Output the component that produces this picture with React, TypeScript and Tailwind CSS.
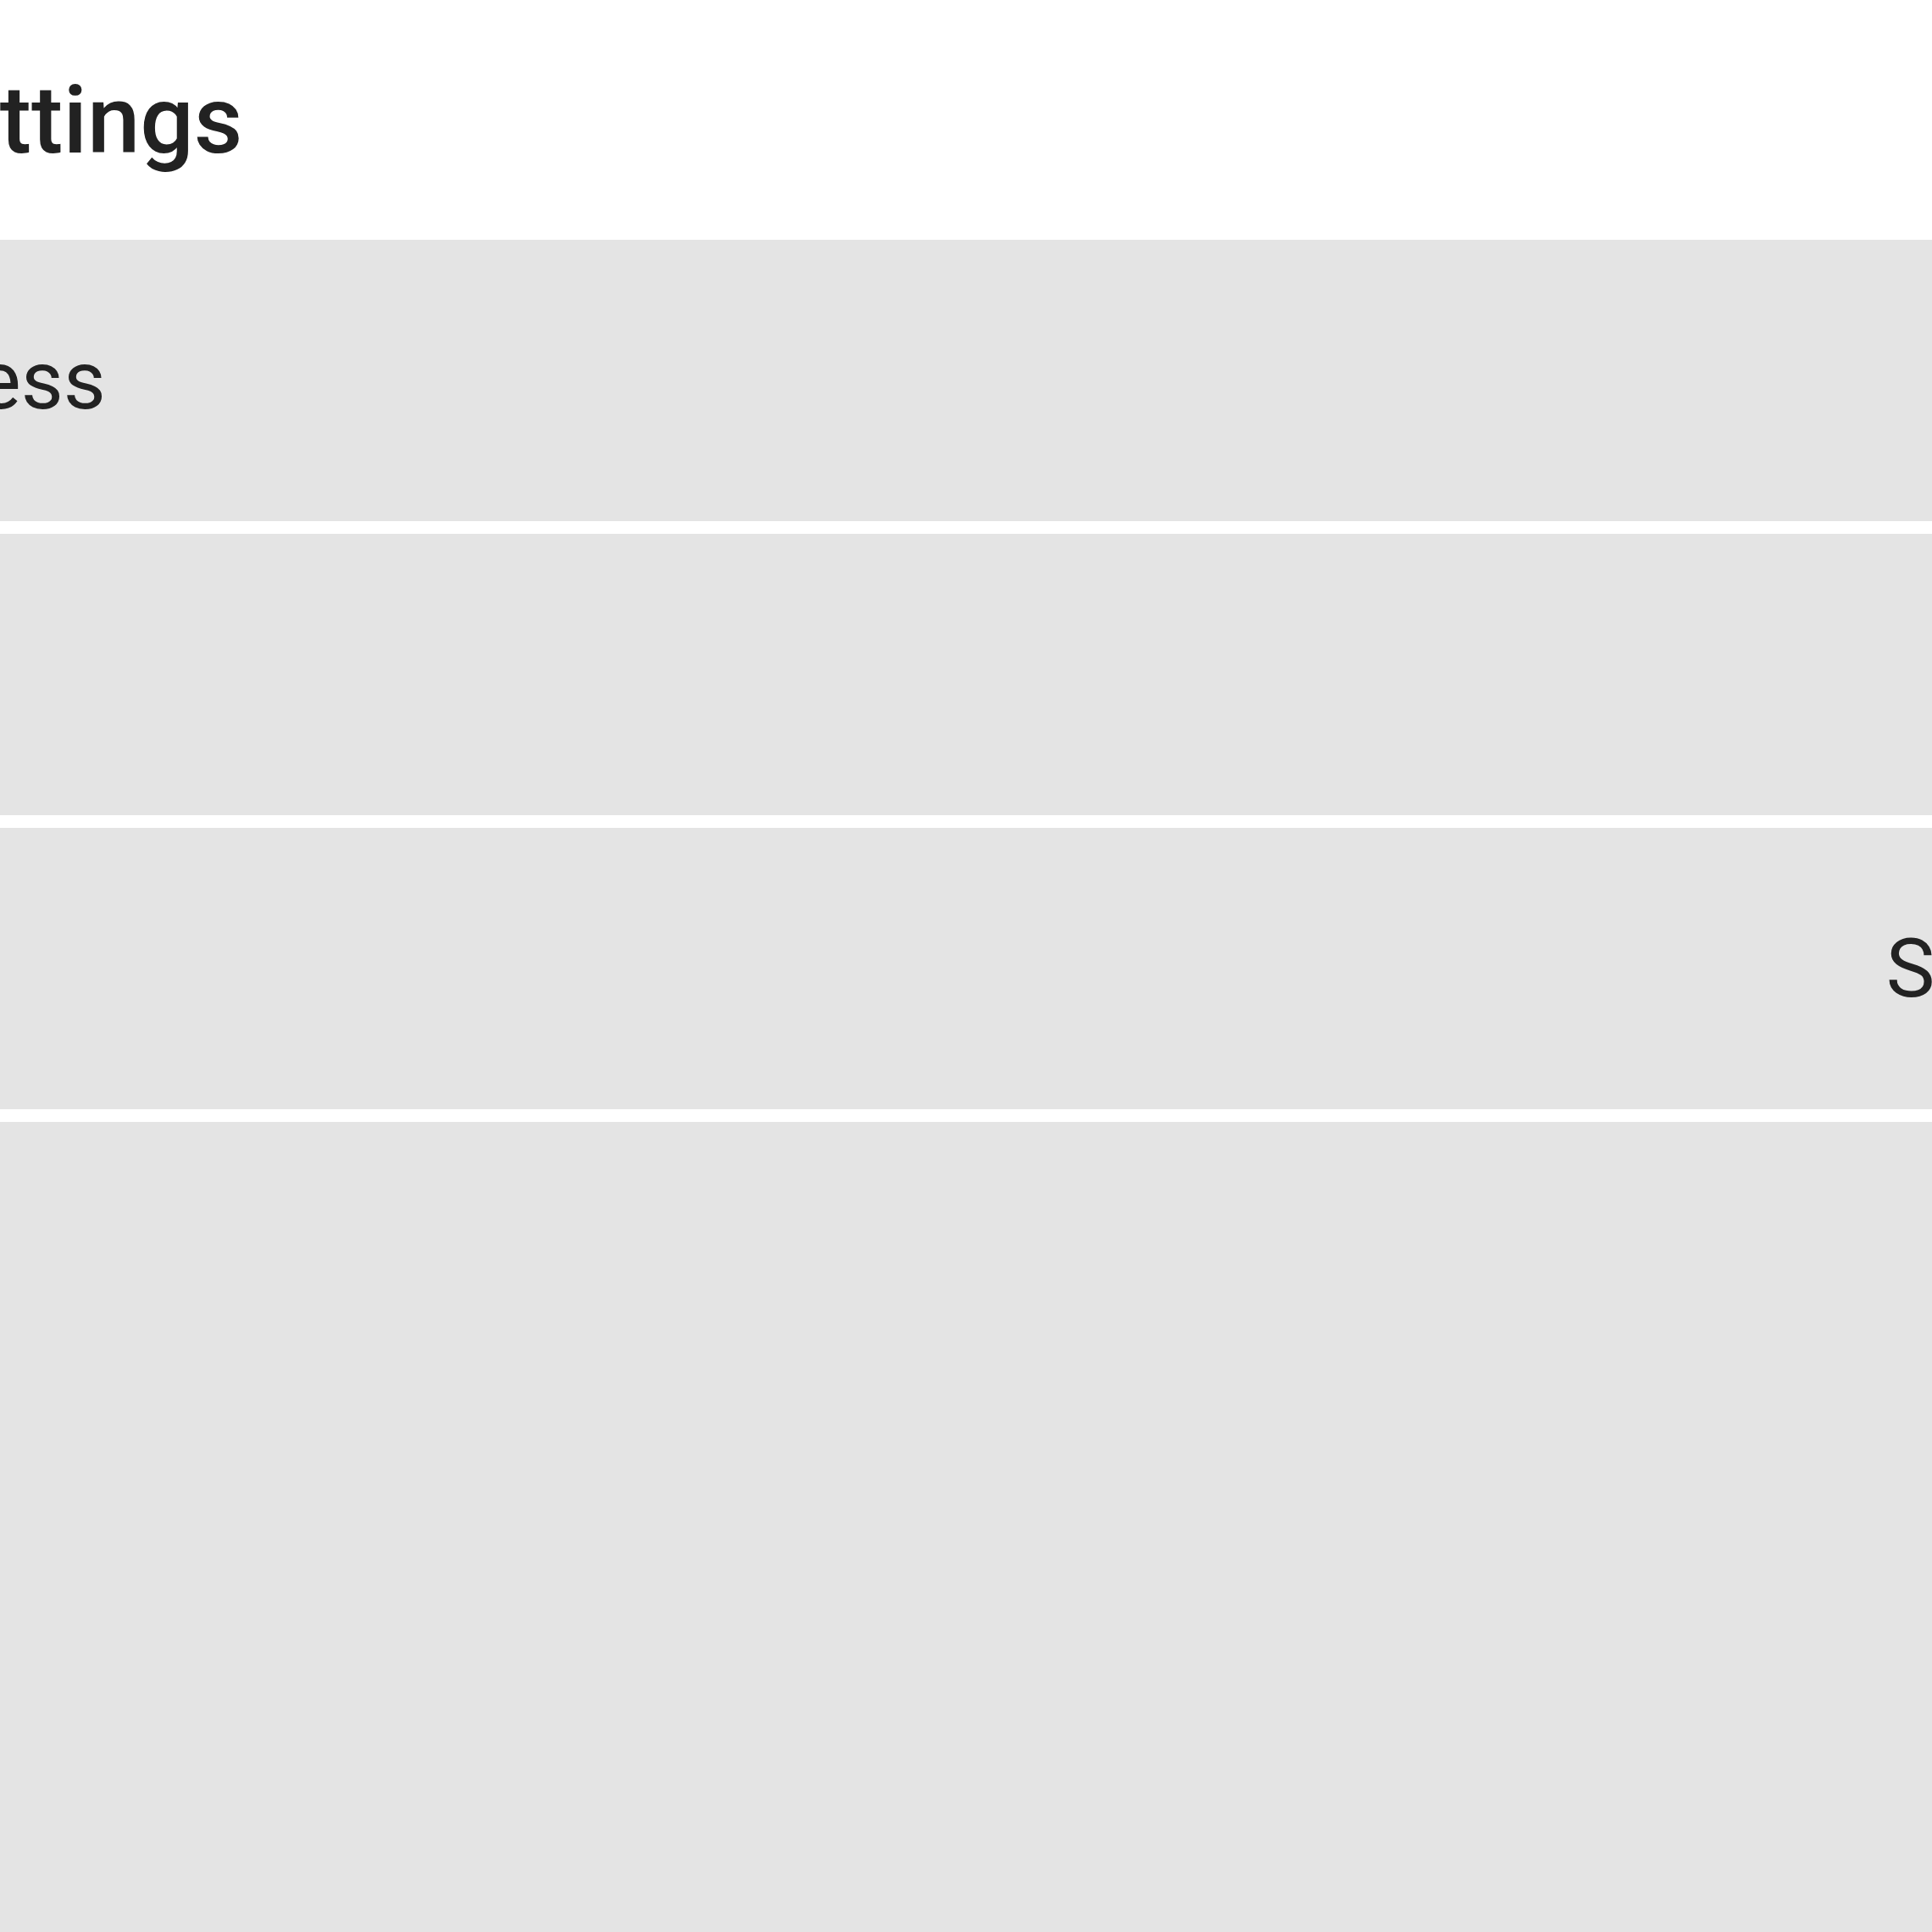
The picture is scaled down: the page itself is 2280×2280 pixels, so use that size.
const ROWS = [
  { label: "Email address", value: "" },
  { label: "Name", value: "" },
  { label: "Theme", value: "System default" },
];

export default function App() {
  return (
    <div
      className="w-[2280px] h-[2280px] overflow-hidden bg-[#e4e4e4] text-[#222222]"
      style={{ fontFamily: "Roboto, 'Noto Sans', sans-serif" }}
    >
      <div className="ml-[-500px] w-[3400px]">
        <header className="h-[283px] bg-white flex items-center pl-[372px]">
          <h1 className="text-[112px] font-medium leading-none">Settings</h1>
        </header>

        {ROWS.map((row) => (
          <div
            key={row.label}
            className="h-[347px] border-b-[15px] border-white flex items-center justify-between pl-[15px] pr-[27px]"
          >
            <span className="text-[97px] leading-none">{row.label}</span>
            {row.value && <span className="text-[97px] leading-none">{row.value}</span>}
          </div>
        ))}
      </div>
    </div>
  );
}
